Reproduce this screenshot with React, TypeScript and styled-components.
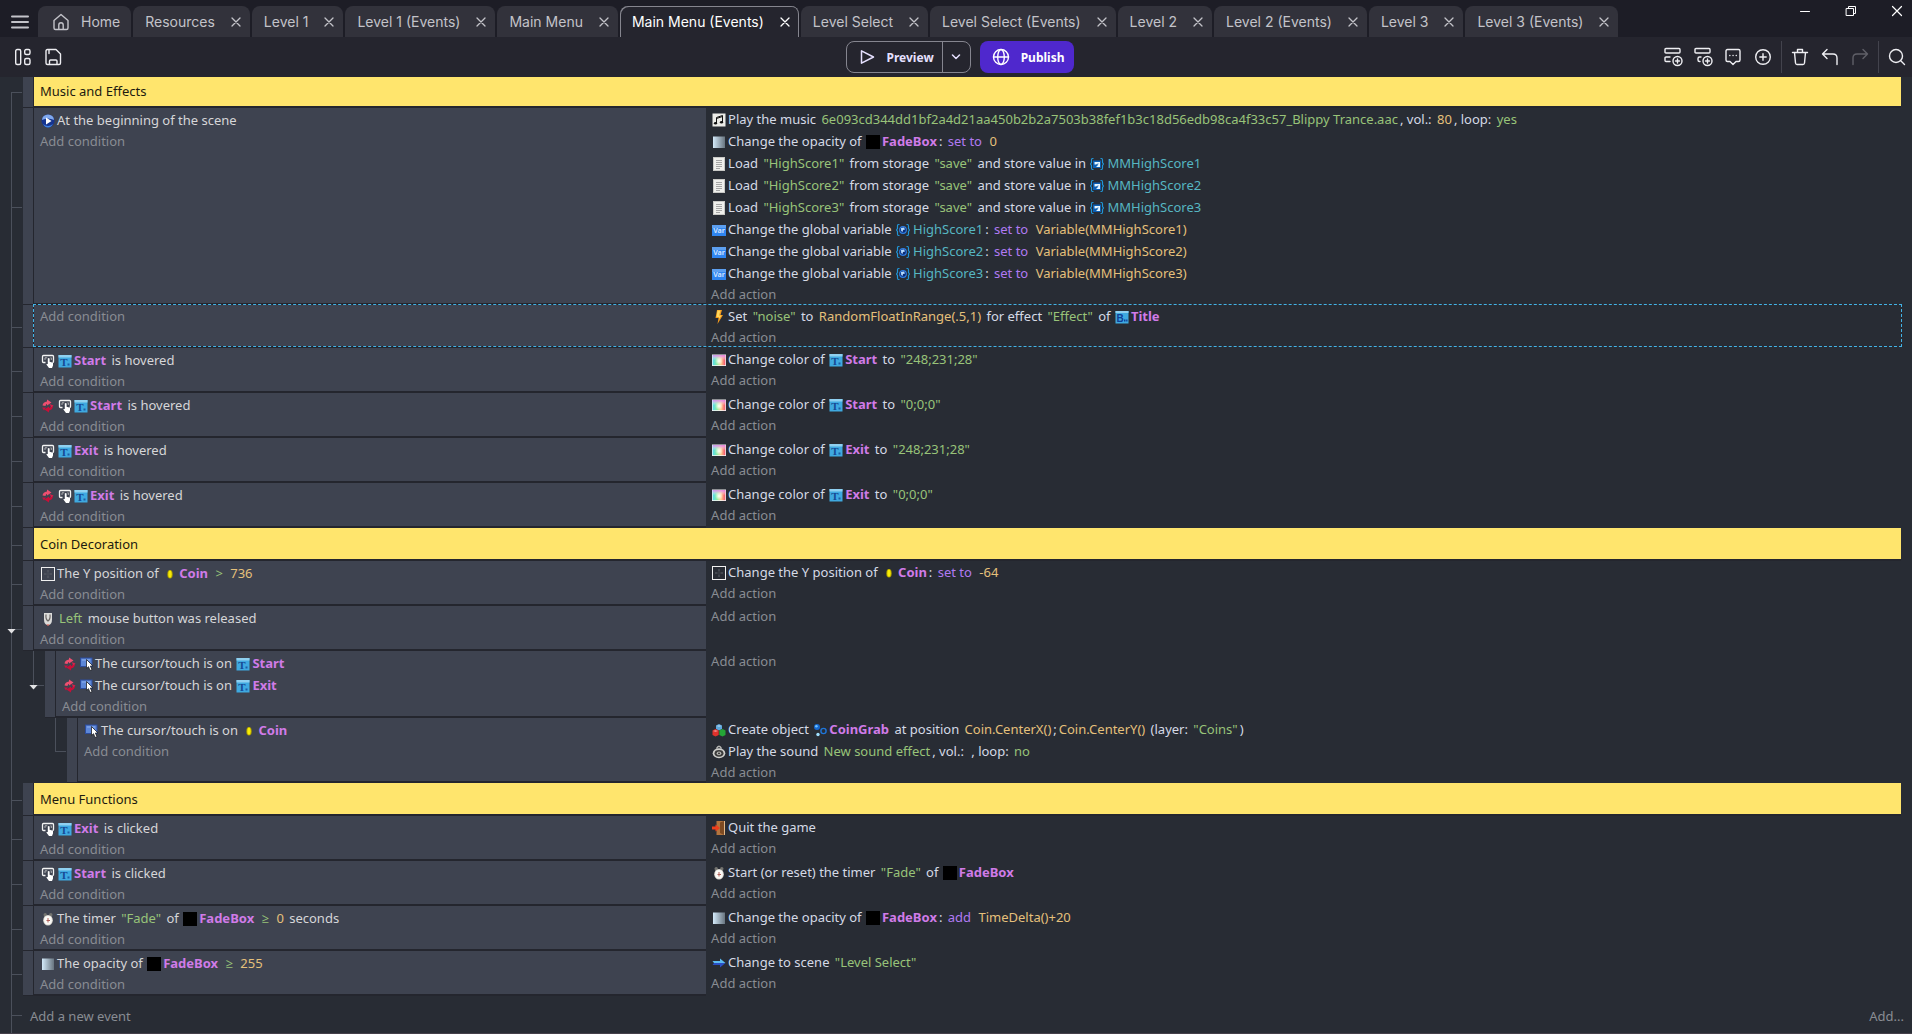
import React from "react";
import type { ReactNode } from "react";
import styled, { createGlobalStyle, css } from "styled-components";

const color = {
  title: "#1d1d26",
  tab: "#32323b",
  bar: "#25252e",
  sheet: "#282c34",
  cell: "#3e4350",
  gap: "#24262e",
  line: "#4b505b",
  comment: "#ffe56d",
  dim: "#898c93",
};

const uiFont = `Inter, "Noto Sans", sans-serif`;
const sheetFont = `"Noto Sans", "Open Sans", sans-serif`;

const GlobalStyle = createGlobalStyle`
  * { box-sizing: border-box; }
  body { margin: 0; background: ${color.sheet}; }
  button { font: inherit; color: inherit; background: none; border: 0; padding: 0; cursor: pointer; }
`;

const Page = styled.div`
  min-height: 100vh;
  display: flex;
  flex-direction: column;
  background: ${color.sheet};
  font-family: ${sheetFont};
  font-size: 13px;
`;

/* Title bar */

const TitleBar = styled.header`
  display: flex;
  align-items: flex-end;
  height: 37px;
  background: ${color.title};
  color: #c3c3c9;
`;

const MenuButton = styled.button`
  display: grid;
  place-items: center;
  width: 38px;
  height: 31px;
  padding-left: 2px;
`;

const Tabs = styled.nav`
  display: flex;
  gap: 2px;
`;

const TabBox = styled.div<{ $active?: boolean; $home?: boolean }>`
  display: flex;
  align-items: center;
  gap: ${(p) => (p.$home ? 11 : 16)}px;
  height: 31px;
  padding: ${(p) => (p.$home ? "0 11px 0 14px" : "0 9px 0 12px")};
  border-radius: 8px 8px 0 0;
  background: ${color.tab};
  font-family: ${uiFont};
  font-size: 14px;
  white-space: nowrap;
  ${(p) =>
    p.$active &&
    css`
      background: ${color.bar};
      box-shadow: inset 1px 1px 0 #85858e, inset -1px 0 0 #85858e;
      color: #fff;
    `}
`;

const CloseTab = styled.button`
  display: grid;
  place-items: center;
  width: 10px;
  height: 20px;
`;

const WindowControls = styled.div`
  display: flex;
  gap: 34px;
  margin-left: auto;
  align-self: flex-start;
  padding-right: 9px;
`;

const WindowButton = styled.button`
  display: grid;
  place-items: center;
  width: 12px;
  height: 22px;
  color: #fff;
`;

/* Toolbar */

const Toolbar = styled.div`
  display: grid;
  grid-template-columns: 1fr auto 1fr;
  align-items: center;
  height: 40px;
  padding-left: 8px;
  background: ${color.bar};
  color: #eeeef2;
`;

const ToolGroup = styled.div<{ $end?: boolean }>`
  display: flex;
  align-items: center;
  justify-content: ${(p) => (p.$end ? "flex-end" : "flex-start")};
`;

const ToolButton = styled.button`
  display: grid;
  place-items: center;
  width: 30px;
  height: 32px;
  &:disabled {
    color: #606068;
  }
`;

const ToolDivider = styled.span`
  width: 1px;
  height: 32px;
  margin: 0 3px;
  background: #43434d;
`;

const Launch = styled.div`
  display: flex;
  gap: 9px;
  font-size: 12px;
  font-weight: 700;
`;

const PreviewGroup = styled.div`
  display: flex;
  height: 32px;
  border: 1px solid #85858f;
  border-radius: 8px;
  color: #e6e0ff;
`;

const PreviewButton = styled.button`
  display: flex;
  align-items: center;
  gap: 12px;
  padding: 0 8px 0 12px;
`;

const PreviewMore = styled.button`
  display: grid;
  place-items: center;
  width: 28px;
  border-left: 1px solid #85858f;
`;

const PublishButton = styled.button`
  display: flex;
  align-items: center;
  gap: 11px;
  height: 32px;
  padding: 0 10px 0 12px;
  border-radius: 8px;
  background: #4f28cd;
  color: #fff;
`;

/* Events sheet */

const Sheet = styled.main`
  flex: 1;
  display: flex;
  flex-direction: column;
  overflow: hidden;
  border-bottom: 1px solid #45404a;
`;

const EventList = styled.div`
  margin-top: -2px;
  padding-right: 11px;
`;

const EventRow = styled.div`
  position: relative;
  display: grid;
  grid-template-columns: 26fr 44fr;
`;

const CommentRow = styled.div`
  display: flex;
`;

const Left = styled.div`
  display: flex;
  min-width: 0;
  padding-left: 1px;
`;

const Gutter = styled.div`
  position: relative;
  display: flex;
  flex-direction: column;
  flex: none;
  width: 22px;
  padding-left: 10px;
`;

const Stem = styled.div<{ $drawn: boolean; $lead?: boolean }>`
  flex: 1 1 ${(p) => (p.$lead ? 2 : 0)}px;
  border-left: 1px solid ${(p) => (p.$drawn ? color.line : "transparent")};
`;

const Tick = styled.div`
  width: 11px;
  height: 1px;
  background: ${color.line};
`;

const Fold = styled.button`
  position: absolute;
  top: 50%;
  left: 6px;
  width: 9px;
  height: 5px;
  background: #e2e2e4;
  clip-path: polygon(0 0, 100% 0, 50% 100%);
`;

const Block = styled.div`
  display: flex;
  flex: 1;
  min-width: 0;
  gap: 1px;
  background: ${color.gap};
`;

const Handle = styled.div`
  flex: none;
  width: 10px;
  margin-bottom: 1px;
  background: ${color.cell};
`;

const Conditions = styled.div`
  flex: 1;
  min-width: 0;
  margin-bottom: 2px;
  padding: 1px 0 0 6px;
  background: ${color.cell};
  color: #d6d6d8;
`;

const Actions = styled.div`
  min-width: 0;
  margin-bottom: 2px;
  padding-left: 5px;
  color: #d5dae6;
`;

const Comment = styled.div`
  flex: 1;
  height: 31px;
  margin-bottom: 2px;
  padding: 1px 0 0 6px;
  background: ${color.comment};
  color: #1d1b10;
  line-height: 31px;
`;

const Glyph = styled.svg`
  width: 14px;
  height: 14px;
  margin: 0 1px;
  vertical-align: -3px;
`;

const Instruction = styled.div`
  height: 22px;
  line-height: 22px;
  white-space: pre;

  > ${Glyph}:first-child {
    margin-right: 2px;
  }
`;

const AddCondition = styled.button`
  display: block;
  height: 20px;
  line-height: 20px;
  color: ${color.dim};
`;

const AddAction = styled.button`
  display: block;
  height: 19px;
  padding-top: 2px;
  line-height: 17px;
  color: ${color.dim};
`;

const Selection = styled.div`
  position: absolute;
  inset: -1px -1px 1px 33px;
  border: 1px dashed #42b3e6;
  pointer-events: none;
`;

const Footer = styled.div`
  display: flex;
  flex: 1;
  justify-content: space-between;
  padding-right: 8px;
  color: ${color.dim};
`;

const FooterLeft = styled.div`
  display: flex;
  padding-left: 1px;
`;

const FooterButton = styled.button`
  align-self: flex-start;
  margin: 10px 0 6px 7px;
  line-height: 20px;
`;

const Param = styled.span<{ $c: string }>`
  padding: 0 2px;
  color: ${(p) => p.$c};
`;

const ObjectName = styled.span`
  padding: 0 2px 0 1px;
  color: #d07be8;
  font-weight: 700;
`;

type Kids = { children?: ReactNode };
const Str = ({ children }: Kids) => <Param $c="#98c379">{children}</Param>;
const Num = ({ children }: Kids) => <Param $c="#e5c07b">{children}</Param>;
const Op = ({ children }: Kids) => <Param $c="#b07af2">{children}</Param>;
const Variable = ({ children }: Kids) => <Param $c="#56b6c2">{children}</Param>;

/* Instruction icons */

const braces =
  "M3.500 1.500h-1q-1 0-1 1.500v2.500L.5 7l1 1.500V11q0 1.500 1 1.500h1M10.500 1.500h1q1 0 1 1.500v2.500l1 1.500-1 1.500V11q0 1.500-1 1.500h-1";

const icons: Record<string, ReactNode> = {
  start: (
    <>
      <circle cx="7" cy="7" r="6.500" fill="#16348f" />
      <path d="M1 6a6 5.500 0 0 1 12 0Q7 3 1 6" fill="#7fa8ee" />
      <path d="M2 10q5 4 10 0-2 3.500-5 3.500T2 10" fill="#3f83e6" />
      <path d="M5 3.500v7l5.500-3.500z" fill="#fff" />
    </>
  ),
  music: (
    <>
      <rect x=".5" y=".5" width="13" height="13" fill="#ecece8" />
      <path d="M4.500 10V4.500l6-2V9M4.500 5.500l6-2" stroke="#111" fill="none" />
      <ellipse cx="3.500" cy="10.300" rx="1.600" ry="1.300" fill="#111" />
      <ellipse cx="9.500" cy="9.300" rx="1.600" ry="1.300" fill="#111" />
    </>
  ),
  opacity: (
    <>
      <defs>
        <linearGradient id="opacityFill">
          <stop offset="0" stopColor="#d3eafa" />
          <stop offset="1" stopColor="#68747f" />
        </linearGradient>
      </defs>
      <rect x="1" y="1.500" width="12" height="11.500" fill="url(#opacityFill)" />
    </>
  ),
  storage: (
    <>
      <rect x="1" y="0" width="12" height="14" fill="#c9c9c6" />
      <rect x="2" y="1" width="10" height="12" fill="#efefec" />
      <path d="M4 3.500h6M4 5.500h6M4 7.500h6M4 9.500h6M4 11.500h4" stroke="#a5a5a5" />
    </>
  ),
  variable: (
    <>
      <rect x="0" y="2" width="14" height="11" fill="#2f85f0" />
      <rect x="0" y="2" width="14" height="3" fill="#5c9ff0" />
      <text x="7" y="10" textAnchor="middle" fontSize="7" fontWeight="700" fontFamily="Noto Sans" fill="#c9e0ff">Var</text>
    </>
  ),
  sceneVar: (
    <>
      <path d={braces} stroke="#2196d8" strokeWidth="1.200" fill="none" />
      <rect x="3" y="3.500" width="8" height="7.500" fill="#0b5fb5" />
      <path d="M4.500 5H10v5H6L8.500 7.500h-4z" fill="#e4f5ff" />
      <path d="M5 9.500 8 6.500" stroke="#0b5fb5" />
    </>
  ),
  globalVar: (
    <>
      <path d={braces} stroke="#2196d8" strokeWidth="1.200" fill="none" />
      <circle cx="7" cy="7" r="3.900" fill="#2f7fe6" />
      <circle cx="7" cy="7" r="2.800" fill="#0a2c78" />
      <path d="M5 5l3-.5 1 2-2 .5-.5 2L5.200 8z" fill="#b7dcff" />
    </>
  ),
  effect: (
    <>
      <path d="M5 0h5L8.500 5H11L5.500 14 6.500 8H3.500z" fill="#f39a1d" />
      <path d="M5.500 .5h3L7 5.500h2.500L7 9V7H4.500z" fill="#ffd85c" />
    </>
  ),
  text: (
    <>
      <rect x=".5" y="1" width="13" height="12.500" fill="#3fa9e0" />
      <rect x=".5" y="1" width="13" height="2.500" fill="#8fd0f0" />
      <text x="6" y="11.500" textAnchor="middle" fontSize="11" fontWeight="700" fontFamily="Liberation Serif" fill="#164a94">T</text>
      <rect x="9.500" y="9.500" width="2" height="2" fill="#1f5ea5" />
    </>
  ),
  bitmapText: (
    <>
      <rect x=".5" y="1" width="13" height="12.500" fill="#3fa9e0" />
      <rect x=".5" y="1" width="13" height="2" fill="#8fd0f0" />
      <text x="5" y="11.500" textAnchor="middle" fontSize="10" fontWeight="700" fontFamily="Liberation Sans" fill="#0f3f96">B</text>
      <path d="M9 10.500h1.500M11.200 10.500h1.300" stroke="#0f3f96" strokeWidth="2" />
    </>
  ),
  hover: (
    <>
      <path d="M4.500 8.500h-2q-1 0-1-1v-5q0-1 1-1h9q1 0 1 1v5q0 1-1 1" stroke="#f4f4f4" strokeWidth="1.300" fill="none" />
      <path d="M4 6V3.800h2.200M9.500 3.800h.8V6" stroke="#c9c9cc" strokeWidth=".8" fill="none" />
      <path d="M6.800 4.500q.9-1 1.800 0v3.300l3.400.9v2.800L11 14H8L5.200 10.300l1.600-.3z" fill="#fff" />
    </>
  ),
  invert: (
    <>
      <path d="M1.500 6.500Q2 3 6 2.500V.5l4.500 3L6 6.500V5Q4.800 5 4.500 7z" fill="#ef4f70" />
      <path d="M12 7.500q-.5 3.500-4 4v2l-4.500-3L8 7.500V9q1.200 0 1.500-1.500z" fill="#c80f38" />
      <path d="M8.500 5l4 1.500-2 2z" fill="#d8204a" />
      <path d="M1 8.500h4L3 11.500z" fill="#c01540" />
    </>
  ),
  color: (
    <>
      <defs>
        <linearGradient id="hueFill">
          <stop offset="0" stopColor="#55d9f2" />
          <stop offset=".35" stopColor="#8cf0a0" />
          <stop offset=".65" stopColor="#ffd08c" />
          <stop offset="1" stopColor="#f5506e" />
        </linearGradient>
        <linearGradient id="hueTop" x2="0" y2="1">
          <stop offset="0" stopColor="#e27cf0" />
          <stop offset="1" stopColor="#fff" stopOpacity="0" />
        </linearGradient>
        <radialGradient id="hueGlow">
          <stop offset="0" stopColor="#fff" />
          <stop offset="1" stopColor="#fff" stopOpacity="0" />
        </radialGradient>
      </defs>
      <rect x="0" y="1.500" width="14" height="11.500" fill="#f4f4f4" />
      <rect x=".7" y="2.200" width="12.600" height="10" fill="url(#hueFill)" />
      <rect x=".7" y="2.200" width="12.600" height="5" fill="url(#hueTop)" />
      <ellipse cx="7" cy="8" rx="4" ry="4" fill="url(#hueGlow)" />
    </>
  ),
  position: (
    <>
      <rect x=".5" y=".5" width="13" height="13" fill="none" stroke="#f0f0f0" />
      <path d="M7 3v2.500M7 8.500V11M3 7h2.500M8.500 7H11M6.500 7h1" stroke="#5d6069" />
    </>
  ),
  coin: (
    <>
      <ellipse cx="7" cy="7.200" rx="2.700" ry="4.300" fill="#a89a00" />
      <ellipse cx="7" cy="7.200" rx="1.700" ry="3.600" fill="#f7ec05" />
    </>
  ),
  mouse: (
    <>
      <path d="M3 1h8v6.500q0 5-4 6-4-1-4-6z" fill="#dcdcda" />
      <path d="M5 2.500q-.5 5 2 6.500 2.500-1.500 2-6.500" stroke="#6a6664" strokeWidth="1.200" fill="none" />
      <path d="M5 12q2 1 4 0l-2 2z" fill="#d74a3d" />
    </>
  ),
  cursor: (
    <>
      <rect x=".5" y="1" width="11.500" height="8.500" fill="#5d87d8" stroke="#2c4c9c" />
      <path d="M2 3h8" stroke="#8fb0ee" />
      <path d="M6.500 2.500v9l2-1.800 1.500 3.800 2-.8-1.600-3.700H13z" fill="#fff" stroke="#1d1f26" strokeWidth=".8" />
    </>
  ),
  create: (
    <>
      <path d="M4 2.500 7 1l3 1.500V6L7 7.500 4 6z" fill="#5fa8dc" />
      <path d="M.5 7.500 3.500 6l3.200 1.500v4.500l-3.200 1.500-3-1.500z" fill="#e0322c" />
      <path d="M7.300 7.500 10.500 6l3 1.500v4.500l-3 1.500-3.200-1.500z" fill="#25a636" />
      <path d="M4.500 3 7 2l2.500 1L7 4zM1 8l2.500-1L6 8 3.500 9z" fill="#fff" opacity=".4" />
    </>
  ),
  particles: (
    <>
      <circle cx="4" cy="4" r="3" fill="#1668cf" />
      <circle cx="3.400" cy="3.300" r="1.300" fill="#6fc3ff" />
      <circle cx="10.500" cy="8" r="2.600" fill="none" stroke="#1f75d8" strokeWidth="1.400" />
      <circle cx="5" cy="11.500" r="1.700" fill="#9fe0ff" />
    </>
  ),
  sound: (
    <>
      <path d="M4.500 3.500Q7-1 9.500 3.500" stroke="#b9b9b6" strokeWidth="1.500" fill="none" />
      <ellipse cx="7" cy="8.300" rx="6.300" ry="5" fill="#cfcfcc" />
      <ellipse cx="7" cy="8.300" rx="4.500" ry="3.400" fill="#3b3b3b" />
      <ellipse cx="7" cy="8.300" rx="2.300" ry="1.900" fill="#b5b5b2" />
      <circle cx="7" cy="8.300" r=".9" fill="#222" />
    </>
  ),
  quit: (
    <>
      <rect x="4.500" y="0" width="8.500" height="14" fill="#b3743e" />
      <path d="M8 1.500l4-1.500v14l-4-2z" fill="#7d4a22" />
      <path d="M12.500 0v14" stroke="#e2b98c" />
      <path d="M0 5.500h3.500V3.500L8 7l-4.500 3.500v-2H0z" fill="#ee3f1c" />
    </>
  ),
  timer: (
    <>
      <circle cx="4.200" cy="2.800" r="1.700" fill="#73736f" />
      <circle cx="9.800" cy="2.800" r="1.700" fill="#73736f" />
      <ellipse cx="7" cy="8.200" rx="4.800" ry="5.200" fill="#dedad3" />
      <ellipse cx="7" cy="8.200" rx="3.800" ry="4.200" fill="#fbfaf6" />
      <path d="M7 6v2.500h2M5.500 8.500H7M7 9v1.500" stroke="#b0605a" fill="none" />
    </>
  ),
  scene: (
    <>
      <path d="M.5 5H8V2.500L13.500 7H2z" fill="#5cbcf2" />
      <path d="M2 7h11.500L8 11.500V9H.5z" fill="#2a4fc4" />
    </>
  ),
  black: <rect width="14" height="14" fill="#000" />,
};

const Icon = ({ name }: { name: string }) => (
  <Glyph viewBox="0 0 14 14" aria-hidden="true">
    {icons[name]}
  </Glyph>
);

const Obj = ({ icon, children }: { icon: string; children: ReactNode }) => (
  <>
    <Icon name={icon} />
    <ObjectName>{children}</ObjectName>
  </>
);

/* Events */

type EventData = {
  comment?: string;
  level?: number;
  folded?: boolean;
  selected?: boolean;
  conditions?: ReactNode[];
  actions?: ReactNode[];
};

const load = (n: number) => (
  <><Icon name="storage" />Load <Str>"HighScore{n}"</Str> from storage <Str>"save"</Str> and store value in <Icon name="sceneVar" /><Variable>MMHighScore{n}</Variable></>
);
const setGlobal = (n: number) => (
  <><Icon name="variable" />Change the global variable <Icon name="globalVar" /><Variable>HighScore{n}</Variable>: <Op>set to</Op> <Num>Variable(MMHighScore{n})</Num></>
);
const pointer = (name: string, verb: string, inverted = false) => (
  <>{inverted && <Icon name="invert" />}<Icon name="hover" /><Obj icon="text">{name}</Obj> is {verb}</>
);
const tint = (name: string, value: string) => (
  <><Icon name="color" />Change color of <Obj icon="text">{name}</Obj> to <Str>"{value}"</Str></>
);
const touching = (icon: string, name: string, inverted = false) => (
  <>{inverted && <Icon name="invert" />}<Icon name="cursor" />The cursor/touch is on <Obj icon={icon}>{name}</Obj></>
);

const events: EventData[] = [
  { comment: "Music and Effects" },
  {
    conditions: [<><Icon name="start" />At the beginning of the scene</>],
    actions: [
      <><Icon name="music" />Play the music <Str>6e093cd344dd1bf2a4d21aa450b2b2a7503b38fef1b3c18d56edb98ca4f33c57_Blippy Trance.aac</Str>, vol.: <Num>80</Num>, loop: <Str>yes</Str></>,
      <><Icon name="opacity" />Change the opacity of <Obj icon="black">FadeBox</Obj>: <Op>set to</Op> <Num>0</Num></>,
      load(1), load(2), load(3),
      setGlobal(1), setGlobal(2), setGlobal(3),
    ],
  },
  {
    selected: true,
    actions: [
      <><Icon name="effect" />Set <Str>"noise"</Str> to <Num>RandomFloatInRange(.5,1)</Num> for effect <Str>"Effect"</Str> of <Obj icon="bitmapText">Title</Obj></>,
    ],
  },
  { conditions: [pointer("Start", "hovered")], actions: [tint("Start", "248;231;28")] },
  { conditions: [pointer("Start", "hovered", true)], actions: [tint("Start", "0;0;0")] },
  { conditions: [pointer("Exit", "hovered")], actions: [tint("Exit", "248;231;28")] },
  { conditions: [pointer("Exit", "hovered", true)], actions: [tint("Exit", "0;0;0")] },
  { comment: "Coin Decoration" },
  {
    conditions: [<><Icon name="position" />The Y position of <Obj icon="coin">Coin</Obj> <Str>&gt;</Str> <Num>736</Num></>],
    actions: [<><Icon name="position" />Change the Y position of <Obj icon="coin">Coin</Obj>: <Op>set to</Op> <Num>-64</Num></>],
  },
  { folded: true, conditions: [<><Icon name="mouse" /><Str>Left</Str> mouse button was released</>] },
  { level: 1, folded: true, conditions: [touching("text", "Start", true), touching("text", "Exit", true)] },
  {
    level: 2,
    conditions: [touching("coin", "Coin")],
    actions: [
      <><Icon name="create" />Create object <Obj icon="particles">CoinGrab</Obj> at position <Num>Coin.CenterX()</Num>;<Num>Coin.CenterY()</Num> (layer: <Str>"Coins"</Str>)</>,
      <><Icon name="sound" />Play the sound <Str>New sound effect</Str>, vol.: <Num />, loop: <Str>no</Str></>,
    ],
  },
  { comment: "Menu Functions" },
  { conditions: [pointer("Exit", "clicked")], actions: [<><Icon name="quit" />Quit the game</>] },
  {
    conditions: [pointer("Start", "clicked")],
    actions: [<><Icon name="timer" />Start (or reset) the timer <Str>"Fade"</Str> of <Obj icon="black">FadeBox</Obj></>],
  },
  {
    conditions: [<><Icon name="timer" />The timer <Str>"Fade"</Str> of <Obj icon="black">FadeBox</Obj> <Str>≥</Str> <Num>0</Num> seconds</>],
    actions: [<><Icon name="opacity" />Change the opacity of <Obj icon="black">FadeBox</Obj>: <Op>add</Op> <Num>TimeDelta()+20</Num></>],
  },
  {
    conditions: [<><Icon name="opacity" />The opacity of <Obj icon="black">FadeBox</Obj> <Str>≥</Str> <Num>255</Num></>],
    actions: [<><Icon name="scene" />Change to scene <Str>"Level Select"</Str></>],
  },
];

/* One gutter per tree level: the outermost line runs on, the innermost carries the tick. */
const Gutters = ({ level = 0, first, folded }: { level?: number; first?: boolean; folded?: boolean }) => (
  <>
    {Array.from({ length: level + 1 }, (_, i) => (
      <Gutter key={i}>
        {i === level ? (
          <>
            <Stem $lead $drawn={!first} />
            <Tick />
            <Stem $drawn={level === 0} />
            {folded && <Fold aria-label="Collapse sub-events" />}
          </>
        ) : (
          <Stem $drawn={i === 0} />
        )}
      </Gutter>
    ))}
  </>
);

const EventView = ({ event, first }: { event: EventData; first: boolean }) => {
  if (event.comment) {
    return (
      <CommentRow>
        <Left><Gutters first={first} /></Left>
        <Block>
          <Handle />
          <Comment>{event.comment}</Comment>
        </Block>
      </CommentRow>
    );
  }
  return (
    <EventRow>
      <Left>
        <Gutters level={event.level} folded={event.folded} />
        <Block>
          <Handle />
          <Conditions>
            {event.conditions?.map((c, i) => <Instruction key={i}>{c}</Instruction>)}
            <AddCondition>Add condition</AddCondition>
          </Conditions>
        </Block>
      </Left>
      <Actions>
        {event.actions?.map((a, i) => <Instruction key={i}>{a}</Instruction>)}
        <AddAction>Add action</AddAction>
      </Actions>
      {event.selected && <Selection />}
    </EventRow>
  );
};

/* Interface icons */

const Stroke = styled.svg<{ $w: number; $h: number; $sw?: number }>`
  display: block;
  width: ${(p) => p.$w}px;
  height: ${(p) => p.$h}px;
  fill: none;
  stroke: currentColor;
  stroke-width: ${(p) => p.$sw ?? 1.5}px;
  stroke-linecap: round;
  stroke-linejoin: round;
`;

const Draw = ({ w, h = w, sw, d, children }: { w: number; h?: number; sw?: number; d?: string; children?: ReactNode }) => (
  <Stroke $w={w} $h={h} $sw={sw} viewBox={`0 0 ${w} ${h}`} aria-hidden="true">
    {d && <path d={d} />}
    {children}
  </Stroke>
);

const addEventPath = "M3 1.500h13q1 0 1 1v2.500q0 1-1 1H3q-1 0-1-1V2.500q0-1 1-1z";
const plusCircle = (
  <>
    <circle cx="14.500" cy="14" r="4.500" />
    <path d="M14.500 12v4M12.500 14h4" />
  </>
);

const tabs = [
  "Resources", "Level 1", "Level 1 (Events)", "Main Menu", "Main Menu (Events)", "Level Select",
  "Level Select (Events)", "Level 2", "Level 2 (Events)", "Level 3", "Level 3 (Events)",
];
const activeTab = "Main Menu (Events)";

export default function App() {
  return (
    <Page>
      <GlobalStyle />
      <TitleBar>
        <MenuButton aria-label="Menu">
          <Draw w={18} h={14} sw={2} d="M1 1.500h16M1 7h16M1 12.500h16" />
        </MenuButton>
        <Tabs>
          <TabBox $home>
            <Draw w={18} h={18} sw={1.4} d="M2 15V7.500L9 1.500l7 6V15q0 1.500-1.500 1.500h-11Q2 16.500 2 15zM6.800 16.500V12q0-2.200 2.200-2.200t2.200 2.200v4.500" />
            <button>Home</button>
          </TabBox>
          {tabs.map((t) => (
            <TabBox key={t} $active={t === activeTab}>
              <button>{t}</button>
              <CloseTab aria-label={`Close ${t}`}>
                <Draw w={10} sw={1.3} d="M1 1l8 8M9 1l-8 8" />
              </CloseTab>
            </TabBox>
          ))}
        </Tabs>
        <WindowControls>
          <WindowButton aria-label="Minimize"><Draw w={12} sw={1} d="M1.500 6.500h9" /></WindowButton>
          <WindowButton aria-label="Restore"><Draw w={12} sw={1} d="M1.500 3.500h7v7h-7zM3.500 3.500v-2h7v7h-2" /></WindowButton>
          <WindowButton aria-label="Close"><Draw w={12} sw={1.2} d="M1.500 1.500l9 9M10.500 1.500l-9 9" /></WindowButton>
        </WindowControls>
      </TitleBar>

      <Toolbar>
        <ToolGroup>
          <ToolButton aria-label="Panels">
            <Draw w={18} sw={1.4}>
              <rect x="1.700" y="1.500" width="5" height="15" rx="1.500" />
              <rect x="10.700" y="1.500" width="5.300" height="5" rx="1.500" />
              <rect x="10.700" y="10.500" width="5.300" height="6" rx="1.500" />
            </Draw>
          </ToolButton>
          <ToolButton aria-label="Save">
            <Draw w={18} sw={1.4} d="M3.500 1.500h8.500l4.500 4.500v9q0 1.500-1.500 1.500H3.500Q2 16.500 2 15V3q0-1.500 1.500-1.500zM5 1.500v4M5.500 16.500V13q0-1 1-1H12q1 0 1 1v3.500" />
          </ToolButton>
        </ToolGroup>
        <Launch>
          <PreviewGroup>
            <PreviewButton>
              <Draw w={16} h={16} d="M2.500 1.800v12.400L14.500 8z" />
              Preview
            </PreviewButton>
            <PreviewMore aria-label="Preview options">
              <Draw w={10} h={6} d="M1.500 1L5 4.500 8.500 1" />
            </PreviewMore>
          </PreviewGroup>
          <PublishButton>
            <Draw w={18} sw={1.4}>
              <circle cx="9" cy="9" r="7.500" />
              <ellipse cx="9" cy="9" rx="3.300" ry="7.500" />
              <path d="M1.500 9h15" />
            </Draw>
            Publish
          </PublishButton>
        </Launch>
        <ToolGroup $end>
          <ToolButton aria-label="Add event">
            <Draw w={20} sw={1.4} d={addEventPath}>
              <path d="M7 10H3q-1 0-1 1v2.500q0 1 1 1h4" />
              {plusCircle}
            </Draw>
          </ToolButton>
          <ToolButton aria-label="Add sub-event">
            <Draw w={20} sw={1.4} d={addEventPath}>
              <path d="M8 10H6.500q-1.500 0-1.500 1.500V13q0 1.500 1.500 1.500H7" />
              {plusCircle}
            </Draw>
          </ToolButton>
          <ToolButton aria-label="Add comment">
            <Draw w={18} sw={1.4} d="M3.500 1.500h11Q16 1.500 16 3v9q0 1.500-1.500 1.500H12L9 16.500l-3-3H3.500Q2 13.500 2 12V3q0-1.500 1.500-1.500zM5.800 7.500h.1M9 7.500h.1M12.200 7.500h.1" />
          </ToolButton>
          <ToolButton aria-label="Add">
            <Draw w={18} sw={1.4}>
              <circle cx="9" cy="9" r="7.300" />
              <path d="M9 5.800v6.400M5.800 9h6.400" />
            </Draw>
          </ToolButton>
          <ToolDivider />
          <ToolButton aria-label="Delete">
            <Draw w={18} sw={1.4} d="M1.500 4.500h15M6.500 4.500v-3h5v3M3.500 4.500l1 10.500q.2 1.500 1.500 1.500h6q1.300 0 1.500-1.500l1-10.500" />
          </ToolButton>
          <ToolButton aria-label="Undo">
            <Draw w={18} sw={1.4} d="M6 1.500L1.500 6 6 10.500M1.500 6H12q4 0 4 4v6.500" />
          </ToolButton>
          <ToolButton aria-label="Redo" disabled>
            <Draw w={18} sw={1.4} d="M12 1.500L16.500 6 12 10.500M16.500 6H6Q2 6 2 10v6.500" />
          </ToolButton>
          <ToolDivider />
          <ToolButton aria-label="Search">
            <Draw w={18} sw={1.4}>
              <circle cx="8" cy="8" r="6.500" />
              <path d="M13 13l3.500 3.500" />
            </Draw>
          </ToolButton>
        </ToolGroup>
      </Toolbar>

      <Sheet>
        <EventList>
          {events.map((e, i) => <EventView key={i} event={e} first={i === 0} />)}
        </EventList>
        <Footer>
          <FooterLeft>
            <Gutter>
              <Stem $lead $drawn />
              <Tick />
              <Stem $drawn />
            </Gutter>
            <FooterButton>Add a new event</FooterButton>
          </FooterLeft>
          <FooterButton>Add...</FooterButton>
        </Footer>
      </Sheet>
    </Page>
  );
}
